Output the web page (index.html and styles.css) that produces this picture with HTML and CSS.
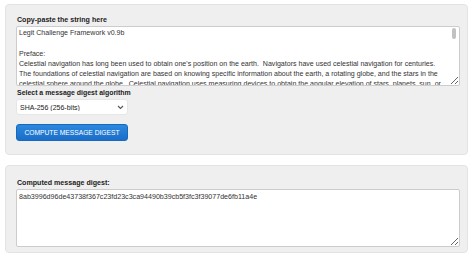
FILE: index.html
```html
<!DOCTYPE html>
<html lang="en">
<head>
    <meta charset="UTF-8">
    <meta name="viewport" content="width=device-width, initial-scale=1.0">
    <title>Message Digest</title>
    <link rel="stylesheet" href="styles.css">
</head>
<body>

<!-- Input panel -->
<div class="well">
    <label class="field-label" for="inputText">Copy-paste the string here</label>
    <div class="area-wrap">
        <textarea id="inputText" class="input-area" wrap="off" spellcheck="false">Legit Challenge Framework v0.9b

Preface:
Celestial navigation has long been used to obtain one's position on the earth.  Navigators have used celestial navigation for centuries.
The foundations of celestial navigation are based on knowing specific information about the earth, a rotating globe, and the stars in the
celestial sphere around the globe.  Celestial navigation uses measuring devices to obtain the angular elevation of stars, planets, sun, or
moon above the horizon, and precise time keeping to compute the position of the observer.

Chapter 1:
The sextant measures the angle between a celestial body and the visible horizon.  The navigator records the exact time of each
sight and later reduces the observation using published tables.
Each reduced sight gives a line of position.  Two or more lines of position crossing on the chart give a fix.

Chapter 2:
The nautical almanac lists the positions of the sun, moon, planets and navigational stars for every hour of every day of the year.
With an accurate chronometer the navigator can find the longitude, and with the altitude of the pole star the latitude.

Chapter 3:
Dead reckoning carries the position forward between fixes using the course steered, the speed and the time elapsed.
Currents, leeway and steering errors all add up, so the navigator takes fresh sights whenever the sky is clear.</textarea>
        
        <span class="scroll-thumb"></span>
    </div>

    <label class="field-label label-select" for="algo">Select a message digest algorithm</label>
    <div class="select-wrap">
        <select id="algo" class="algo-select">
            <option>SHA-256 (256-bits)</option>
        </select>
        <svg class="chevron" width="7" height="5" viewBox="0 0 7 5"><path d="M1 1 L3.5 3.5 L6 1" fill="none" stroke="#555" stroke-width="1.1"/></svg>
    </div>

    <button class="btn-primary" type="button">COMPUTE MESSAGE DIGEST</button>
</div>

<!-- Output panel -->
<div class="well well-out">
    <label class="field-label" for="digest">Computed message digest:</label>
    <textarea id="digest" class="output-area" spellcheck="false">8ab3996d96de43738f367c23fd23c3ca94490b39cb5f3fc3f39077de6fb11a4e</textarea>
</div>

</body>
</html>
```

FILE: styles.css
```css
body {
    margin: 0;
    padding: 4px 6px 0 5px;
    background: #fff;
    font-family: "Liberation Sans", Arial, sans-serif;
    font-size: 7px;
    color: #333;
}

.well {
    display: flex;
    flex-direction: column;
    align-items: flex-start;
    background-color: #efefef;
    border: 1px solid #e3e3e3;
    border-radius: 4px;
    padding: 10px 7px 13px 10px;
}

.well-out {
    margin-top: 10px;
    padding-top: 12px;
    padding-bottom: 5px;
}

.field-label {
    font-size: 7.1px;
    font-weight: bold;
    line-height: 11px;
    color: #222;
    margin-left: 1px;
}

.label-select {
    font-size: 6.95px;
    line-height: 10px;
    margin-top: 2px;
}

.area-wrap {
    position: relative;
    width: 100%;
}

.input-area,
.output-area {
    display: block;
    box-sizing: border-box;
    width: 100%;
    margin: 0;
    padding: 1px 2px;
    border: 1px solid #ccc;
    border-radius: 2px;
    background: #fff;
    font-family: "Liberation Sans", Arial, sans-serif;
    font-size: 7.05px;
    line-height: 10.3px;
    color: #333;
    resize: vertical;
}

.input-area {
    height: 60px;
    padding-right: 12px;
    overflow: hidden;
}

.output-area {
    height: 58px;
    padding-top: 2px;
    font-size: 7.1px;
}

.scroll-thumb {
    position: absolute;
    top: 2px;
    right: 4px;
    width: 4px;
    height: 11px;
    border-radius: 2px;
    background: #c2c2c2;
}

.select-wrap {
    position: relative;
    width: 112px;
    margin-top: 1px;
}

.algo-select {
    -webkit-appearance: none;
    appearance: none;
    display: block;
    box-sizing: border-box;
    width: 100%;
    height: 16px;
    padding: 0 3px;
    border: 1px solid #e6e6e6;
    border-radius: 3px;
    background: #fff;
    font-family: "Liberation Sans", Arial, sans-serif;
    font-size: 7px;
    color: #222;
}

.chevron {
    position: absolute;
    right: 4px;
    top: 6px;
}

.btn-primary {
    margin-top: 9px;
    width: 112px;
    height: 17px;
    padding: 0;
    border: 1px solid #1669bd;
    border-radius: 3px;
    background: linear-gradient(#2c88de, #1b6ec7);
    color: #fff;
    font-family: "Liberation Sans", Arial, sans-serif;
    font-size: 6.7px;
}
```
